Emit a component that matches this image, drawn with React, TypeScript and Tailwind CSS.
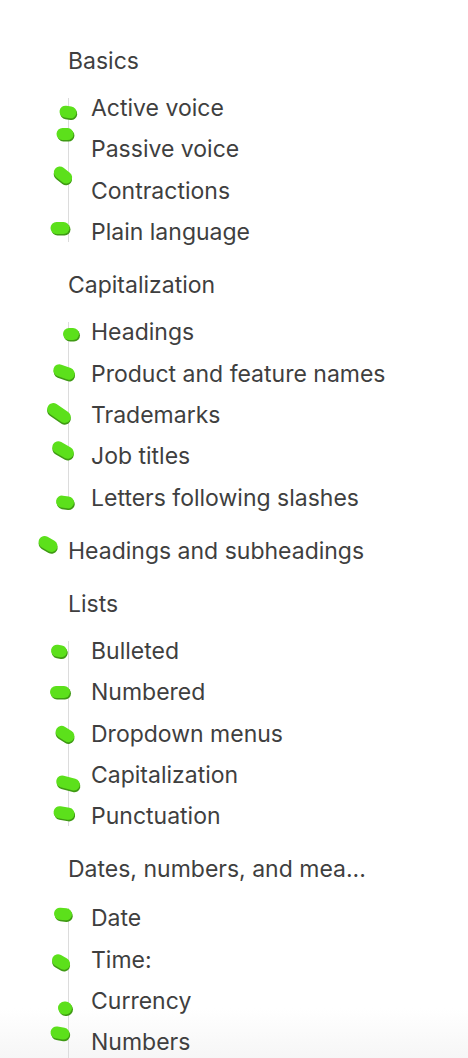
import React from "react";

type Section = { title: string; items: string[]; more?: boolean };

const sections: Section[] = [
  { title: "Basics", items: ["Active voice", "Passive voice", "Contractions", "Plain language"] },
  {
    title: "Capitalization",
    items: ["Headings", "Product and feature names", "Trademarks", "Job titles", "Letters following slashes"],
  },
  { title: "Headings and subheadings", items: [] },
  { title: "Lists", items: ["Bulleted", "Numbered", "Dropdown menus", "Capitalization", "Punctuation"] },
  { title: "Dates, numbers, and mea...", items: ["Date", "Time:", "Currency", "Numbers"], more: true },
];

// Highlighter dabs next to each entry, free-hand marks over the outline.
const marks: string[] = [
  "left-[68px] top-[112px] w-[17px] h-[12px] rotate-[8deg]",
  "left-[65px] top-[134px] w-[17px] h-[12px] rotate-[2deg]",
  "left-[63px] top-[175px] w-[20px] h-[12px] rotate-[38deg]",
  "left-[60px] top-[228px] w-[19px] h-[12px] rotate-[0deg]",

  "left-[71px] top-[334px] w-[16px] h-[12px] rotate-[0deg]",
  "left-[64px] top-[372px] w-[22px] h-[12px] rotate-[20deg]",
  "left-[59px] top-[413px] w-[26px] h-[12px] rotate-[34deg]",
  "left-[63px] top-[450px] w-[23px] h-[12px] rotate-[30deg]",
  "left-[65px] top-[502px] w-[18px] h-[12px] rotate-[8deg]",

  "left-[48px] top-[544px] w-[20px] h-[12px] rotate-[30deg]",

  "left-[59px] top-[651px] w-[16px] h-[12px] rotate-[10deg]",
  "left-[60px] top-[692px] w-[20px] h-[12px] rotate-[0deg]",
  "left-[65px] top-[734px] w-[20px] h-[12px] rotate-[32deg]",
  "left-[68px] top-[783px] w-[24px] h-[12px] rotate-[15deg]",
  "left-[64px] top-[813px] w-[21px] h-[12px] rotate-[10deg]",

  "left-[63px] top-[914px] w-[18px] h-[12px] rotate-[6deg]",
  "left-[61px] top-[962px] w-[19px] h-[12px] rotate-[30deg]",
  "left-[65px] top-[1008px] w-[14px] h-[13px] rotate-[0deg]",
  "left-[60px] top-[1033px] w-[19px] h-[12px] rotate-[10deg]",
];

export default function App() {
  return (
    <div
      className="relative h-[1058px] w-full overflow-hidden bg-white text-[#3f3f3f]"
      style={{ fontFamily: 'Inter, "Noto Sans", sans-serif' }}
    >
      {/* soft shade at the foot of the panel, behind the list */}
      <div className="pointer-events-none absolute inset-x-0 bottom-0 h-[50px] bg-gradient-to-b from-white to-[#f6f6f6]" />

      <nav className="relative flex flex-col gap-[33px] pl-[68px] pt-[51px]">
        {sections.map((s) => (
          <div key={s.title} className="flex flex-col">
            <div className="whitespace-nowrap text-[23px] leading-[20px]">{s.title}</div>
            {s.items.length > 0 && (
              <ul
                className={
                  s.more
                    ? "mt-[29px] flex flex-col gap-[21.4px] border-l border-[#dcdcdc] pb-[40px]"
                    : "mt-[27px] flex flex-col gap-[21.4px] border-l border-[#dcdcdc]"
                }
              >
                {s.items.map((it) => (
                  <li key={it} className="whitespace-nowrap pl-[22px] text-[23px] leading-[20px]">
                    {it}
                  </li>
                ))}
              </ul>
            )}
          </div>
        ))}
      </nav>

      {marks.map((m, i) => (
        <span
          key={i}
          className={`pointer-events-none absolute -translate-x-1/2 -translate-y-1/2 rounded-full bg-[#5ce01b] shadow-[1px_1.5px_0_#3f9a14] ${m}`}
        />
      ))}
    </div>
  );
}
